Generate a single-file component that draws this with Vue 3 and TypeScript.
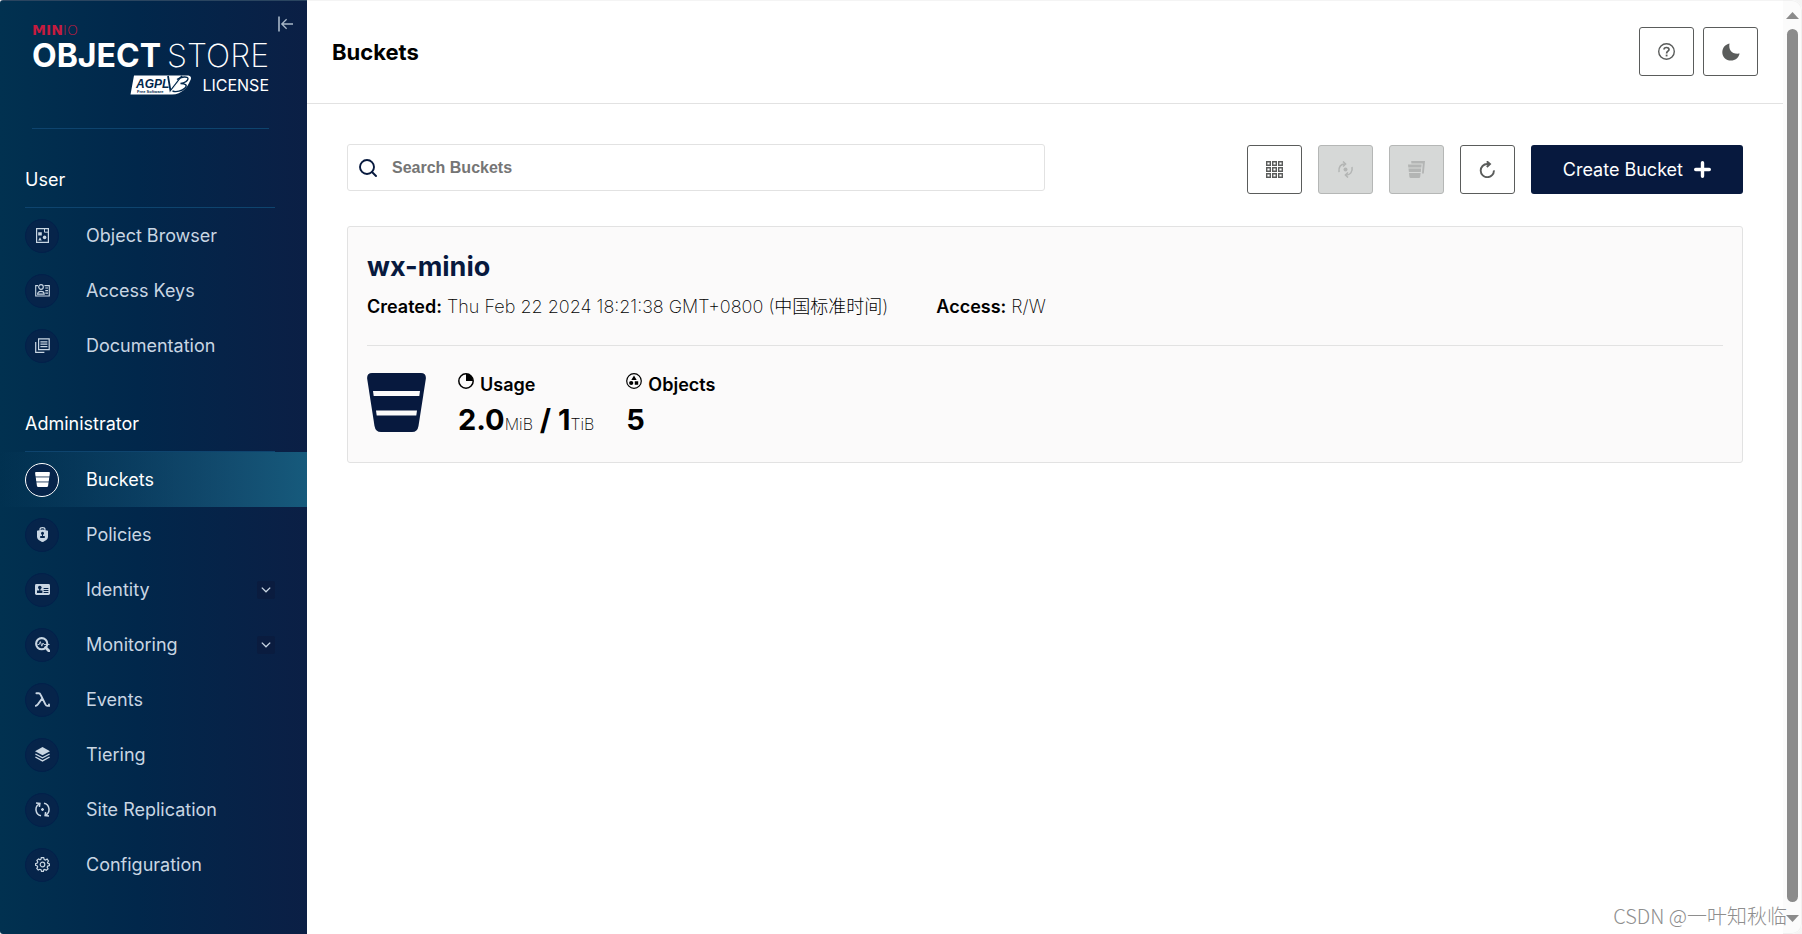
<script setup lang="ts">
import { ref } from 'vue'

interface NavItem {
  label: string
  icon: string
  expandable?: boolean
}

const userItems: NavItem[] = [
  { label: 'Object Browser', icon: 'browser' },
  { label: 'Access Keys', icon: 'keys' },
  { label: 'Documentation', icon: 'docs' },
]

const adminItems: NavItem[] = [
  { label: 'Buckets', icon: 'bucket' },
  { label: 'Policies', icon: 'policy' },
  { label: 'Identity', icon: 'identity', expandable: true },
  { label: 'Monitoring', icon: 'monitoring', expandable: true },
  { label: 'Events', icon: 'lambda' },
  { label: 'Tiering', icon: 'tiers' },
  { label: 'Site Replication', icon: 'replication' },
  { label: 'Configuration', icon: 'gear' },
]

const groups = [
  { title: 'User', items: userItems },
  { title: 'Administrator', items: adminItems },
]

const active = ref('Buckets')
const search = ref('')
</script>

<template>
  <div class="app">
    <aside class="sidebar">
      <button class="collapse" type="button" aria-label="Collapse menu">
        <svg width="16" height="16" viewBox="0 0 16 16" fill="none" stroke="currentColor">
          <path d="M1 0.5V15.5" stroke-width="1.6" />
          <path d="M15 8H4M8.6 3.2L3.8 8l4.8 4.8" stroke-width="1.3" />
        </svg>
      </button>
      <div class="logo">
        <div class="logo-brand"><b>MIN</b><span>IO</span></div>
        <div class="logo-name"><b>OBJECT</b><span>STORE</span></div>
        <div class="logo-license">
          <svg class="agpl" width="62" height="20" viewBox="0 0 62 20">
            <path d="M4 0.5H57C61.5 0.5 61.8 3 60 6C57.5 12 52 19.5 42 19.5H0.5z" fill="#fff" />
            <path d="M38 1L40.5 16L52 1" fill="none" stroke="#02284d" stroke-width="1.8" />
            <path d="M39.5 18.5L52 2.5" stroke="#fff" stroke-width="1.2" />
            <path d="M47 4.5C51 1.5 58.5 1.2 58 3.8C57.5 6.5 53 8 50.5 8.5C56 8.5 57.5 10.5 55 13C52 16 46 17.5 42.5 16" fill="none" stroke="#02284d" stroke-width="1.4" />
            <text x="6" y="13" class="agpl-text">AGPL</text>
            <text x="7" y="18" class="agpl-small">Free Software</text>
          </svg>
          <span>LICENSE</span>
        </div>
      </div>

      <nav v-for="group in groups" :key="group.title" class="group" :aria-label="group.title">
        <h2 class="group-title">{{ group.title }}</h2>
        <ul class="menu">
          <li v-for="item in group.items" :key="item.label">
            <a
              href="#"
              class="menu-item"
              :class="{ active: item.label === active }"
              @click.prevent="active = item.label"
            >
              <span class="bubble">
                <svg v-if="item.icon === 'browser'" viewBox="0 0 15 15" fill="none" stroke="currentColor">
                  <path d="M1.6 0.6H13.4V14.4H1.6z" stroke-width="1.2" />
                  <path d="M9.5 1V4.2H13" stroke-width="1" />
                  <path d="M3.2 4.2H6.8V7.4H3.2zM3.2 12.6L5 9.3L6.8 12.6z" fill="currentColor" stroke="none" />
                  <circle cx="9.6" cy="9.4" r="1.8" fill="currentColor" stroke="none" />
                </svg>
                <svg v-else-if="item.icon === 'keys'" viewBox="0 0 15 15" fill="none" stroke="currentColor">
                  <path d="M3 2.6H0.7V13H14.3V2.6H9.5" stroke-width="1.1" />
                  <circle cx="6" cy="4" r="2.3" stroke-width="1.2" />
                  <path d="M2.6 11.2C2.6 7.4 9.2 7.4 9.2 11.2z" stroke-width="1.2" />
                  <path d="M10.3 5H13M10.3 7.6H13M10.3 10.2H13" stroke-width="1.2" />
                </svg>
                <svg v-else-if="item.icon === 'docs'" viewBox="0 0 15 15" fill="none" stroke="currentColor">
                  <path d="M3.6 0.8H14.2V11.6H3.6z" stroke-width="1.2" />
                  <path d="M0.7 4V14.3H9.4M5.4 3.8H12.4M5.4 6.2H12.4M5.4 8.6H12.4" stroke-width="1.2" />
                </svg>
                <svg v-else-if="item.icon === 'bucket'" viewBox="0 0 15 15" fill="currentColor">
                  <path d="M1 0H14Q15 0 14.9 1L14.5 4H0.5L0.1 1Q0 0 1 0zM0.8 5.4H14.2L13.8 9H1.2zM1.5 10.6H13.5L13.1 13.8Q12.9 15 11.8 15H3.2Q2.1 15 1.9 13.8z" />
                  <path d="M0.5 4H14.5L14.3 5.4H0.7zM1.2 9H13.8L13.5 10.6H1.5z" opacity=".55" />
                </svg>
                <svg v-else-if="item.icon === 'policy'" viewBox="0 0 15 15">
                  <path d="M5 3.2V2.4C5 0 10 0 10 2.4V3.2" fill="none" stroke="currentColor" stroke-width="1.2" />
                  <path d="M2 3.8L7.5 2.4L13 3.8V9.4C13 12.2 10.4 13.8 7.5 15C4.6 13.8 2 12.2 2 9.4z" fill="currentColor" />
                  <circle cx="7.5" cy="6.3" r="1.5" fill="#06244a" />
                  <path d="M7 7H8V9H9.8V11H5.2V9H7z" fill="#06244a" />
                </svg>
                <svg v-else-if="item.icon === 'identity'" viewBox="0 0 15 15">
                  <rect y="2" width="15" height="11" rx="1.4" fill="currentColor" />
                  <circle cx="4.8" cy="5.6" r="1.8" fill="#06244a" />
                  <path d="M4.2 7H5.4V8.6H7.4V11H2V8.6H4.2zM8.6 6H13.4V7H8.6zM8.6 8H13.4V9H8.6zM8.6 10H13.4V11H8.6z" fill="#06244a" />
                </svg>
                <svg v-else-if="item.icon === 'monitoring'" viewBox="0 0 15 15" fill="none" stroke="currentColor">
                  <circle cx="6.7" cy="6.7" r="5.6" stroke-width="2.1" />
                  <path d="M10.6 10.6L14 14" stroke-width="2.8" stroke-linecap="round" />
                  <path d="M2.6 7.5H4.2L5.3 4.6L6.8 9.2L8 6L9 7.5H14.5" stroke-width="0.9" />
                </svg>
                <svg v-else-if="item.icon === 'lambda'" viewBox="0 0 15 15" fill="none" stroke="currentColor" stroke-width="1.9">
                  <path d="M1.4 1.2H3.6Q5 1.2 5.7 2.8L10.4 12.4Q11.2 13.9 12.4 13.9H14V12.4M7.3 6.4L2.8 12.4Q1.7 13.8 0.8 13.8" stroke-linecap="round" />
                </svg>
                <svg v-else-if="item.icon === 'tiers'" viewBox="0 0 15 15">
                  <path d="M7.5 0L15 4.2L7.5 8.2L0 4.2z" fill="currentColor" />
                  <path d="M0.4 7L7.5 10.8L14.6 7M0.4 10L7.5 13.9L14.6 10" fill="none" stroke="currentColor" stroke-width="1.4" />
                </svg>
                <svg v-else-if="item.icon === 'replication'" viewBox="0 0 15 15" fill="none" stroke="currentColor" stroke-width="1.5">
                  <path d="M6 13.8A6.4 6.4 0 0 1 4.4 1.9M9 1.2A6.4 6.4 0 0 1 10.6 13.1" />
                  <path d="M1 0.9L4.9 1.4L4.4 5M14 14.1L10.1 13.6L10.6 10" />
                  <path d="M7.5 6V9M6 7.5H9" stroke-width="1.3" />
                </svg>
                <svg v-else viewBox="0 0 15 15" fill="none" stroke="currentColor" stroke-width="1.2">
                  <path d="M6.3 0.7H8.7L9.2 2.5L10.5 3L12.1 2.1L13.5 4L12.5 5.4L12.8 6.3L14.4 7V8.6L12.7 9.1L12.2 10.3L13 11.9L11.3 13.3L9.8 12.4L8.8 12.8L8.4 14.3H6.5L6 12.7L4.8 12.3L3.2 13.1L1.8 11.4L2.7 9.9L2.3 8.9L0.6 8.4V6.6L2.3 6.1L2.8 5L1.9 3.4L3.6 1.9L5 2.8L5.9 2.4z" />
                  <circle cx="7.5" cy="7.5" r="2.3" />
                </svg>
              </span>
              <span class="menu-label">{{ item.label }}</span>
              <span v-if="item.expandable" class="chevron">
                <svg width="10" height="6" viewBox="0 0 10 6" fill="none" stroke="currentColor" stroke-width="1.3">
                  <path d="M0.8 0.6L5 4.8L9.2 0.6" />
                </svg>
              </span>
            </a>
          </li>
        </ul>
      </nav>
    </aside>

    <main class="main">
      <header class="topbar">
        <h1>Buckets</h1>
        <div class="top-actions">
          <button class="icon-btn" type="button" aria-label="Help">
            <svg width="17" height="17" viewBox="0 0 17 17" fill="none" stroke="currentColor">
              <circle cx="8.5" cy="8.5" r="7.8" stroke-width="1.4" />
              <path d="M6 6.6C6 3.8 11 3.8 11 6.5C11 8.3 8.6 8.1 8.6 10.4" stroke-width="1.7" />
              <path d="M8.6 11.6V13.4" stroke-width="1.8" />
            </svg>
          </button>
          <button class="icon-btn" type="button" aria-label="Dark mode">
            <svg width="18" height="18" viewBox="0 0 18 18" fill="currentColor">
              <path d="M7.5 0.5C6.4 6.5 9.5 11.6 17.6 10.6C16.6 15 13.2 17.6 9 17.6C4 17.6 0.3 14 0.3 9.2C0.3 5 3.2 1.4 7.5 0.5z" />
            </svg>
          </button>
        </div>
      </header>

      <section class="content">
        <div class="toolbar">
          <label class="search">
            <svg width="18" height="18" viewBox="0 0 18 18" fill="none" stroke="currentColor" stroke-width="1.9">
              <circle cx="8" cy="8" r="7" />
              <path d="M13 13L17 17" stroke-linecap="round" />
            </svg>
            <input v-model="search" type="text" placeholder="Search Buckets" aria-label="Search Buckets" />
          </label>
          <div class="actions">
            <button class="icon-btn" type="button" aria-label="Grid view">
              <svg width="17" height="17" viewBox="0 0 17 17" fill="none" stroke="currentColor" stroke-width="1.4">
                <path d="M.7.7H4.3V4.3H.7zM6.7.7H10.3V4.3H6.7zM12.7.7H16.3V4.3H12.7zM.7 6.7H4.3V10.3H.7zM6.7 6.7H10.3V10.3H6.7zM12.7 6.7H16.3V10.3H12.7zM.7 12.7H4.3V16.3H.7zM6.7 12.7H10.3V16.3H6.7zM12.7 12.7H16.3V16.3H12.7z" />
              </svg>
            </button>
            <button class="icon-btn" type="button" disabled aria-label="Set lifecycle">
              <svg width="17" height="17" viewBox="0 0 17 17" fill="none" stroke="currentColor" stroke-width="1.5">
                <path d="M2 11.2C1.2 6 4 2.8 8 3M15 6C16 10.8 13 14.2 9 14" />
                <path d="M6 0.5L8.6 3L6 5.5M11 11.5L8.4 14L11 16.5" />
                <circle cx="8.5" cy="8.6" r="2" fill="currentColor" stroke="none" />
              </svg>
            </button>
            <button class="icon-btn" type="button" disabled aria-label="Set replication">
              <svg width="17" height="17" viewBox="0 0 17 17" fill="currentColor">
                <path d="M0 3.6H13.6L13.3 6.6H0.3zM0.5 7.6H13.1L12.8 11H0.9zM1 12H12.6L12.2 16Q12 17 11 17H2.6Q1.6 17 1.4 16z" />
                <path d="M3.2 0H17L15.8 12.4H14L14.8 2.4H3.4z" />
              </svg>
            </button>
            <button class="icon-btn" type="button" aria-label="Refresh">
              <svg width="17" height="17" viewBox="0 0 17 17" fill="none" stroke="currentColor" stroke-width="1.9">
                <path d="M10.5 3H8.2A6.6 6.6 0 1 0 14.9 9.4" />
                <path d="M7.8 0.3L11 3L7.8 6" />
              </svg>
            </button>
            <button class="create" type="button">
              Create Bucket
              <svg width="17" height="17" viewBox="0 0 17 17" stroke="currentColor" stroke-width="3.4" stroke-linecap="round">
                <path d="M8.5 1.7V15.3M1.7 8.5H15.3" />
              </svg>
            </button>
          </div>
        </div>

        <article class="card">
          <h2 class="card-title">wx-minio</h2>
          <div class="meta">
            <div><b>Created:</b> Thu Feb 22 2024 18:21:38 GMT+0800 (中国标准时间)</div>
            <div><b>Access:</b> R/W</div>
          </div>
          <div class="stats">
            <svg class="bucket" width="59" height="59" viewBox="0 0 59 59">
              <path d="M5 0H54Q59.5 0 58.8 6L51.5 53Q50.5 59 45 59H14Q8.5 59 7.5 53L0.2 6Q-0.5 0 5 0z" fill="#07193e" />
              <path d="M6 18H53L52.3 23H6.7zM9 37.5H50L49.3 42.5H9.7z" fill="#fbfafa" />
            </svg>
            <div class="stat">
              <div class="stat-label">
                <svg width="16" height="16" viewBox="0 0 16 16">
                  <circle cx="8" cy="8" r="7.2" fill="none" stroke="currentColor" stroke-width="1.5" />
                  <path d="M8 0.8A7.2 7.2 0 0 1 15.2 8H8z" fill="currentColor" />
                </svg>
                Usage
              </div>
              <div class="stat-value">2.0<small>MiB</small> / 1<small>TiB</small></div>
            </div>
            <div class="stat">
              <div class="stat-label">
                <svg width="16" height="16" viewBox="0 0 16 16" fill="currentColor">
                  <circle cx="8" cy="8" r="7.3" fill="none" stroke="currentColor" stroke-width="1.2" />
                  <path d="M8 2.6L10.7 7H5.3zM8.8 8.2H12.2V11.8H8.8z" />
                  <circle cx="5.2" cy="10" r="2.1" />
                </svg>
                Objects
              </div>
              <div class="stat-value">5</div>
            </div>
          </div>
        </article>
      </section>
    </main>

    <div class="scrollbar" aria-hidden="true">
      <svg width="13" height="7" viewBox="0 0 13 7"><path d="M6.5 0L13 7H0z" fill="#8b8b8b" /></svg>
      <div class="thumb"></div>
      <svg width="13" height="7" viewBox="0 0 13 7"><path d="M0 0H13L6.5 7z" fill="#8b8b8b" /></svg>
    </div>
    <div class="watermark">CSDN @一叶知秋临</div>
  </div>
</template>

<style>
body {
  margin: 0;
  background: #f4f4f4;
}
</style>

<style scoped>
* {
  box-sizing: border-box;
}
.app {
  display: flex;
  min-height: 100vh;
  position: relative;
  overflow: hidden;
  border-radius: 3px 10px 10px 3px;
  background: #fff;
  color: #000;
  font-family: Inter, "Noto Sans CJK SC", sans-serif;
  font-size: 18px;
}
h1,
h2,
ul {
  margin: 0;
  padding: 0;
}
ul {
  list-style: none;
}
button,
input {
  font: inherit;
  padding: 0;
}

/* Sidebar */
.sidebar {
  position: relative;
  flex: 0 0 307px;
  background: linear-gradient(90deg, #013150 0%, #01274b 45%, #0b1f45 100%);
  color: #fff;
  border-top: 1px solid #2a4560;
}
.collapse {
  position: absolute;
  top: 15px;
  right: 13px;
  width: 16px;
  height: 16px;
  border: 0;
  background: none;
  color: #a9b8c8;
}
.collapse svg {
  display: block;
}
.logo {
  margin: 0 38px 0 32px;
  padding-top: 22px;
  height: 128px;
  border-bottom: 1px solid #0e446e;
}
.logo-brand {
  color: #c51b3f;
  font-family: "DejaVu Sans", sans-serif;
  font-size: 14px;
  line-height: 14px;
}
.logo-brand b {
  font-weight: 700;
}
.logo-brand span {
  font-weight: 200;
}
.logo-name {
  display: flex;
  justify-content: space-between;
  font-size: 32px;
  line-height: 38px;
}
.logo-name b {
  font-weight: 700;
}
.logo-name span {
  font-weight: 200;
}
.logo-license {
  display: flex;
  justify-content: flex-end;
  align-items: center;
  gap: 10px;
  font-size: 16px;
  line-height: 20px;
}
.agpl-text {
  font: italic 700 12px "Liberation Sans", sans-serif;
  fill: #02284d;
}
.agpl-small {
  font: 700 4px "Liberation Sans", sans-serif;
  fill: #02284d;
}
.group {
  padding-top: 38px;
}
.group-title {
  margin: 0 32px 0 25px;
  height: 41px;
  border-bottom: 1px solid #0e446e;
  font-size: 18px;
  line-height: 26px;
  font-weight: 400;
}
.menu-item {
  display: flex;
  align-items: center;
  height: 55px;
  padding: 0 32px 0 25px;
  color: #c9d6e3;
  text-decoration: none;
}
.menu-item.active {
  color: #fff;
  background: linear-gradient(90deg, transparent 0%, #165a7c 100%);
}
.bubble {
  display: flex;
  align-items: center;
  justify-content: center;
  width: 34px;
  height: 34px;
  margin-right: 27px;
  border: 1px solid #02204a;
  border-radius: 50%;
  background: #06244a;
}
.bubble svg {
  width: 15px;
  height: 15px;
}
.active .bubble {
  border-color: #fff;
}
.chevron {
  display: flex;
  align-items: center;
  justify-content: center;
  width: 18px;
  height: 18px;
  margin-left: auto;
  border-radius: 2px;
  background: #0a1c3f;
}

/* Main */
.main {
  flex: 1;
  min-width: 0;
}
.topbar {
  display: flex;
  align-items: center;
  justify-content: space-between;
  height: 104px;
  padding: 0 25px 1px;
  border-top: 1px solid #f4f4f4;
  border-bottom: 1px solid #e2e2e2;
}
.topbar h1 {
  font-size: 22px;
  font-weight: 700;
}
.top-actions {
  display: flex;
  gap: 9px;
}
.icon-btn {
  display: flex;
  align-items: center;
  justify-content: center;
  width: 55px;
  height: 49px;
  border: 1px solid #5a5c5b;
  border-radius: 3px;
  background: #fff;
  color: #5a5c5b;
}
.icon-btn:disabled {
  border-color: #b5b7b6;
  background: #d6d8d7;
  color: #b3b5b4;
}
.content {
  padding: 40px;
}
.toolbar {
  display: flex;
  align-items: flex-start;
  justify-content: space-between;
}
.search {
  display: flex;
  align-items: center;
  gap: 15px;
  width: 50%;
  height: 47px;
  padding: 0 11px;
  border: 1px solid #e2e2e2;
  border-radius: 3px;
  color: #07193e;
}
.search input {
  flex: 1;
  min-width: 0;
  border: 0;
  outline: 0;
  background: none;
  font: 700 16px "Liberation Sans", Arial, sans-serif;
}
.search input::placeholder {
  color: #757575;
  opacity: 1;
}
.actions {
  display: flex;
  gap: 16px;
  padding-top: 1px;
}
.create {
  display: flex;
  align-items: center;
  gap: 11px;
  height: 49px;
  padding: 0 32px;
  border: 0;
  border-radius: 3px;
  background: #07193e;
  color: #fff;
}
.card {
  margin-top: 32px;
  padding: 20px 19px 14px;
  border: 1px solid #e2e2e2;
  border-radius: 3px;
  background: #fbfafa;
}
.card-title {
  color: #07193e;
  font-size: 27px;
  line-height: 40px;
  font-weight: 700;
}
.meta {
  display: flex;
  gap: 48px;
  padding: 4px 0 22px;
  border-bottom: 1px solid #e2e2e2;
  line-height: 32px;
  font-weight: 200;
}
.meta b {
  font-weight: 600;
}
.stats {
  display: flex;
  gap: 32px;
  padding-top: 27px;
}
.stat-label {
  display: flex;
  gap: 6px;
  line-height: 23px;
  font-weight: 600;
}
.stat-value {
  font-size: 29px;
  line-height: 48px;
  font-weight: 700;
}
.stat-value small {
  font-size: 16px;
  font-weight: 200;
}

/* Page scroll track */
.scrollbar {
  display: flex;
  flex-direction: column;
  align-items: center;
  gap: 10px;
  width: 19px;
  padding: 11px 0;
  border: solid #f1f1f1;
  border-width: 1px 1px 1px 0;
  border-radius: 0 10px 10px 0;
  background: #fbfbfb;
}
.thumb {
  flex: 1;
  width: 11px;
  margin-bottom: 3px;
  border-radius: 6px;
  background: #8b8b8b;
}
.watermark {
  position: absolute;
  right: 15px;
  bottom: 4px;
  color: #8e8e8e;
  font: 300 20px/28px "Noto Sans CJK SC", sans-serif;
}
</style>
